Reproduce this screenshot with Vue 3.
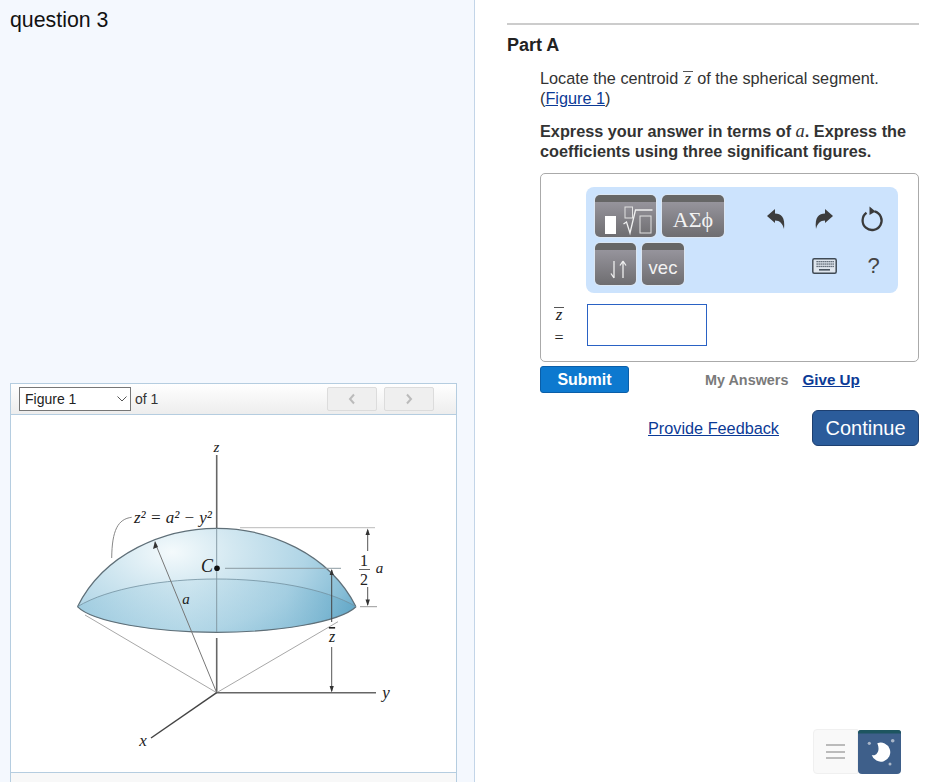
<script setup>
const kbDots = []
for (let r = 0; r < 3; r++) {
  for (let c = 0; c < 9; c++) {
    kbDots.push({ x: 3 + c * 2, y: 3 + r * 2.4 })
  }
}
</script>

<template>
  <div class="page">
    <section class="left">
      <h1 class="title">question 3</h1>
      <div class="panel">
        <div class="panel-head">
          <div class="select">
            <span>Figure 1</span>
            <svg width="10" height="6" viewBox="0 0 10 6"><path d="M0.5 0.5 5 5l4.5-4.5" fill="none" stroke="#555" stroke-width="1" /></svg>
          </div>
          <span class="of">of 1</span>
          <div class="nav">
            <button class="nav-btn" type="button">
              <svg width="8" height="12" viewBox="0 0 8 12"><path d="M6 1.5 2 6l4 4.5" fill="none" stroke="#bbb" stroke-width="2" /></svg>
            </button>
            <button class="nav-btn" type="button">
              <svg width="8" height="12" viewBox="0 0 8 12"><path d="M2 1.5 6 6l-4 4.5" fill="none" stroke="#bbb" stroke-width="2" /></svg>
            </button>
          </div>
        </div>
        <div class="figure">
          <svg class="figure-svg" width="445" height="357" viewBox="11 415 445 357">
            <defs>
              <radialGradient id="domeGrad" gradientUnits="userSpaceOnUse" cx="172" cy="552" r="205" gradientTransform="translate(172 552) scale(1 0.6) translate(-172 -552)">
                <stop offset="0" stop-color="#f4fafc" />
                <stop offset="0.3" stop-color="#d3e8f1" />
                <stop offset="0.65" stop-color="#b0d5e6" />
                <stop offset="0.9" stop-color="#86bdd6" />
                <stop offset="1" stop-color="#6aaccb" />
              </radialGradient>
              <linearGradient id="baseGrad" x1="0" x2="1" y1="0" y2="0">
                <stop offset="0" stop-color="#8fc3da" stop-opacity="0.5" />
                <stop offset="0.4" stop-color="#b9dbe9" stop-opacity="0.35" />
                <stop offset="0.75" stop-color="#94c5db" stop-opacity="0.45" />
                <stop offset="1" stop-color="#62a7c7" stop-opacity="0.75" />
              </linearGradient>
            </defs>
            <line x1="216.7" y1="455" x2="216.7" y2="528" stroke="#666" stroke-width="1.6" />
            <line x1="216.7" y1="638" x2="216.7" y2="693" stroke="#666" stroke-width="1.6" />
            <path d="M85 615 216.7 692.7 338 621.7" fill="none" stroke="#a8a8a8" stroke-width="1" />
            <path d="M77.500 606.700C104 553 165 528.300 216.700 528.300S329 553 356 606.700C340 622 280 632.300 216.700 632.300S92 622 77.500 606.700Z" fill="url(#domeGrad)" />
            <path d="M77.500 606.700C108 588 165 579 216.700 579S325 588 356 606.700C340 622 280 632.300 216.700 632.300S92 622 77.500 606.700Z" fill="url(#baseGrad)" />
            <path d="M77.500 606.700C104 553 165 528.300 216.700 528.300S329 553 356 606.700" fill="none" stroke="#5f6f78" stroke-width="1.2" />
            <path d="M77.500 606.700C92 622 155 632.300 216.700 632.300S340 622 356 606.700" fill="none" stroke="#5f6f78" stroke-width="1.2" />
            <path d="M77.500 606.700C108 588 165 579 216.700 579S325 588 356 606.700" fill="none" stroke="#72909f" stroke-width="0.8" />
            <line x1="216.7" y1="528" x2="216.7" y2="632" stroke="#7d929d" stroke-width="0.9" />
            <line x1="216.7" y1="692.7" x2="155" y2="542.7" stroke="#777" stroke-width="1" />
            <path d="M155 541 153 549 158 547Z" fill="#333" />
            <line x1="240" y1="527.7" x2="375" y2="527.7" stroke="#bbb" stroke-width="1" />
            <line x1="360" y1="606.7" x2="377" y2="606.7" stroke="#999" stroke-width="1" />
            <line x1="225" y1="568.3" x2="341" y2="568.3" stroke="#8b9aa2" stroke-width="1" />
            <line x1="367.7" y1="530" x2="367.7" y2="551" stroke="#555" stroke-width="1" />
            <line x1="367.7" y1="587" x2="367.7" y2="605" stroke="#555" stroke-width="1" />
            <path d="M367.7 528.5 365.5 535h4.4ZM367.7 606 365.5 599.5h4.4Z" fill="#333" />
            <line x1="331.7" y1="570" x2="331.7" y2="622" stroke="#444" stroke-width="1" />
            <line x1="331.7" y1="647" x2="331.7" y2="691" stroke="#555" stroke-width="1" />
            <path d="M331.7 569 329.6 575h4.2ZM331.7 692.5 329.6 686h4.2Z" fill="#333" />
            <line x1="216.7" y1="692.7" x2="376" y2="692.7" stroke="#666" stroke-width="1.6" />
            <line x1="216.7" y1="692.7" x2="151" y2="738" stroke="#444" stroke-width="1.5" />
            <path d="M131.7 517.3C118 519 112 530 111.7 558" fill="none" stroke="#888" stroke-width="1" />
            <circle cx="217" cy="568.3" r="2.8" fill="#111" />
            <g class="fig-text">
              <text x="216.5" y="452" text-anchor="middle" font-size="15">z</text>
              <text x="134" y="523" font-size="17">z² = a² − y²</text>
              <text x="201" y="572" font-size="18">C</text>
              <text x="186" y="604" text-anchor="middle" font-size="15">a</text>
              <text x="379.5" y="573" text-anchor="middle" font-size="15">a</text>
              <text x="386" y="698" text-anchor="middle" font-size="17">y</text>
              <text x="143" y="746" text-anchor="middle" font-size="17">x</text>
              <text x="332" y="642" text-anchor="middle" font-size="16" text-decoration="overline">z</text>
            </g>
            <g class="fig-num">
              <text x="364" y="566" text-anchor="middle" font-size="16">1</text>
              <text x="364" y="585" text-anchor="middle" font-size="16">2</text>
            </g>
            <line x1="359" y1="569.5" x2="370" y2="569.5" stroke="#555" stroke-width="0.9" />
          </svg>
        </div>
        <div class="panel-foot"></div>
      </div>
    </section>

    <section class="right">
      <hr class="rule" />
      <h2 class="part">Part A</h2>
      <div class="content">
        <p class="para">Locate the centroid <span class="zbar">z</span> of the spherical segment.<br />(<a class="link" href="#">Figure 1</a>)</p>
        <p class="para strong">Express your answer in terms of <span class="mathvar">a</span>. Express the coefficients using three significant figures.</p>

        <div class="answer">
          <div class="toolbar">
            <div class="tool-row">
              <div class="tbtn wide1">
                <svg width="61" height="35" viewBox="0 0 61 35">
                  <rect x="10" y="14" width="11" height="18" fill="#fff" />
                  <rect x="30" y="5" width="7.5" height="11" fill="none" stroke="#e2e2e2" stroke-width="1" />
                  <path d="M28.500 22l3-2 3.500 11L40.500 8h17" fill="none" stroke="#f0f0f0" stroke-width="1.300" />
                  <rect x="45" y="14" width="11" height="17" fill="none" stroke="#e2e2e2" stroke-width="1" />
                </svg>
              </div>
              <div class="tbtn wide2"><span class="greek">ΑΣϕ</span></div>
              <div class="tool-icons upper">
                <div class="icell">
                  <svg width="20" height="22" viewBox="0 0 20 22"><path d="M1 8 9 1v4.500c6 0 10.500 3.500 9 15.500-1.500-5.500-4-8.500-9-8.500V15Z" fill="#3d3d3d" /></svg>
                </div>
                <div class="icell">
                  <svg width="20" height="22" viewBox="0 0 20 22"><path d="M19 8 11 1v4.500c-6 0-10.500 3.500-9 15.500 1.500-5.500 4-8.500 9-8.500V15Z" fill="#3d3d3d" /></svg>
                </div>
                <div class="icell">
                  <svg width="26" height="28" viewBox="0 0 26 28">
                    <path d="M15.500 6.300A9.500 9.500 0 1 1 7.500 7.800" fill="none" stroke="#3a3a3a" stroke-width="2.300" />
                    <path d="M10.500 1.500 16.500 6.500 10.500 10Z" fill="#3a3a3a" />
                  </svg>
                </div>
              </div>
            </div>
            <div class="tool-row">
              <div class="tbtn narrow1">
                <svg width="41" height="35" viewBox="0 0 41 35">
                  <path d="M19 11v17M19 28l-3-4.500M28 28V11M28 11l3 4.500M28 11l-3 4.500" fill="none" stroke="#eee" stroke-width="1.300" />
                </svg>
              </div>
              <div class="tbtn narrow2"><span class="vec">vec</span></div>
              <div class="tool-icons lower">
                <div class="icell">
                  <svg width="25" height="16" viewBox="0 0 25 16">
                    <rect x="0.800" y="0.800" width="23.400" height="14.400" rx="1.500" fill="#dfe6ee" stroke="#3f4a55" stroke-width="1.500" />
                    <rect v-for="(d, i) in kbDots" :key="i" :x="d.x + 1.500" :y="d.y" width="1.300" height="1.300" fill="#4a5560" />
                    <rect x="7" y="11" width="11" height="1.600" fill="#4a5560" />
                  </svg>
                </div>
                <div class="icell help">?</div>
              </div>
            </div>
          </div>
          <div class="answer-row">
            <div class="ans-label">
              <span class="zbar">z</span>
              <span class="eq">=</span>
            </div>
            <div class="ans-input"></div>
          </div>
        </div>

        <div class="submit-row">
          <button class="submit" type="button">Submit</button>
          <span class="my">My Answers</span>
          <a class="link giveup" href="#">Give Up</a>
        </div>
        <div class="feedback-row">
          <a class="link" href="#">Provide Feedback</a>
          <button class="continue" type="button">Continue</button>
        </div>
      </div>
    </section>

    <div class="widget">
      <div class="widget-menu">
        <span></span><span></span><span></span>
      </div>
      <div class="widget-moon">
        <svg width="43" height="44" viewBox="0 0 43 44">
          <rect x="0" y="0" width="43" height="3.500" fill="#1d5560" />
          <circle cx="11.300" cy="13.300" r="1.600" fill="#a9b6c8" />
          <circle cx="34.700" cy="10.700" r="1.800" fill="#a9b6c8" />
          <circle cx="32" cy="34" r="1.500" fill="#a9b6c8" />
          <path d="M19.300 13.300A9.500 9.500 0 1 1 13.700 25C19 26.500 22.500 20 19.300 13.300Z" fill="#fff" />
        </svg>
      </div>
    </div>
  </div>
</template>

<style>
html, body { margin: 0; background: #fff; }
</style>

<style scoped>
.page {
  position: relative;
  display: flex;
  width: 929px;
  height: 782px;
  overflow: hidden;
  font-family: "Liberation Sans", Arial, sans-serif;
  color: #333;
  background: #fff;
}
.left {
  box-sizing: border-box;
  width: 475px;
  flex: none;
  padding: 5px 17px 0 10px;
  background: #f4f8fe;
  border-right: 1px solid #c3d5e8;
}
.title {
  margin: 0 0 348px;
  font-size: 21.33px;
  line-height: 30px;
  font-weight: 400;
  color: #111;
}
.panel {
  border: 1px solid #b5cde0;
  background: #fff;
}
.panel-head {
  display: flex;
  align-items: center;
  height: 30px;
  padding-left: 8px;
  padding-right: 22px;
  background: linear-gradient(#fff, #ededed);
  border-bottom: 1px solid #b5cde0;
}
.select {
  box-sizing: border-box;
  display: flex;
  align-items: center;
  justify-content: space-between;
  width: 112px;
  height: 24px;
  padding: 0 3px 0 5px;
  border: 1px solid #767676;
  background: #fff;
  font-size: 14px;
  color: #222;
}
.of {
  margin-left: 4px;
  font-size: 14px;
  color: #333;
}
.nav {
  display: flex;
  gap: 7px;
  margin-left: auto;
}
.nav-btn {
  display: flex;
  align-items: center;
  justify-content: center;
  box-sizing: border-box;
  width: 50px;
  height: 24px;
  padding: 0;
  border: 1px solid #dcdcdc;
  border-radius: 2px;
  background: #efefef;
}
.figure {
  height: 357px;
}
.figure-svg { display: block; }
.fig-text text {
  font-family: "Liberation Serif", serif;
  font-style: italic;
  fill: #222;
}
.fig-num text {
  font-family: "Liberation Serif", serif;
  fill: #222;
}
.panel-foot {
  height: 30px;
  border-top: 1px solid #b5cde0;
  background: #f8f8f8;
}
.right {
  flex: 1;
  min-width: 0;
  padding: 23px 10px 0 32px;
}
.rule {
  margin: 0;
  height: 2px;
  border: 0;
  background: #ccc;
}
.part {
  margin: 10px 0 0;
  font-size: 18px;
  line-height: 20px;
  font-weight: 700;
  color: #222;
}
.content {
  margin-top: 13px;
  padding-left: 33px;
}
.para {
  margin: 0 0 13px;
  font-size: 16.25px;
  line-height: 20px;
  color: #333;
}
.para.strong { font-weight: 700; margin-bottom: 12px; }
.zbar {
  display: inline-block;
  box-sizing: border-box;
  width: 10px;
  height: 13px;
  border-top: 1px solid #555;
  font-family: "Liberation Serif", serif;
  font-style: italic;
  font-weight: 400;
  font-size: 17px;
  line-height: 13px;
  text-align: center;
}
.mathvar {
  font-family: "Liberation Serif", serif;
  font-style: italic;
  font-weight: 400;
  font-size: 18.5px;
  line-height: 1;
}
.link {
  color: #0b3a96;
  text-decoration: underline;
}
.answer {
  box-sizing: border-box;
  height: 189px;
  padding: 13px 20px 0 45px;
  border: 1px solid #aaa;
  border-radius: 5px;
  background: #fff;
}
.toolbar {
  box-sizing: border-box;
  width: 312px;
  height: 106px;
  padding: 8px 2px 0 9px;
  background: #cce3fd;
  border-radius: 8px;
}
.tool-row {
  display: flex;
  gap: 6px;
  height: 42px;
  margin-bottom: 6px;
}
.tbtn {
  box-sizing: border-box;
  height: 42px;
  padding-top: 7px;
  border-radius: 5px;
  background: linear-gradient(#666 7px, #96949c 7px, #6e6d70);
  box-shadow: 0 0 0 1px #dbe6f2;
  display: flex;
  align-items: center;
  justify-content: center;
  color: #f2f2f2;
}
.wide1 { width: 61px; }
.wide2 { width: 62px; }
.narrow1 { width: 41px; }
.narrow2 { width: 42px; }
.greek {
  font-family: "Liberation Serif", serif;
  font-size: 22px;
  line-height: 1;
}
.vec {
  font-size: 18.5px;
  line-height: 1;
  margin-top: 1px;
}
.tool-icons {
  display: flex;
  margin-left: auto;
}
.upper { padding-top: 3px; }
.lower { padding-top: 2px; }
.icell {
  display: flex;
  align-items: center;
  justify-content: center;
  width: 48px;
  height: 42px;
}
.help {
  padding-left: 3px;
  box-sizing: border-box;
  font-size: 22px;
  color: #444;
}
.answer-row {
  display: flex;
  margin-top: 11px;
}
.ans-label {
  display: flex;
  flex-direction: column;
  align-items: center;
  width: 36px;
  margin-left: -45px;
  margin-right: 10px;
  padding-top: 3px;
  font-size: 16px;
  line-height: 20px;
  color: #222;
}
.eq {
  font-family: "Liberation Serif", serif;
  margin-top: 8px;
}
.ans-input {
  box-sizing: border-box;
  width: 120px;
  height: 42px;
  border: 1px solid #2a62c4;
  background: #fff;
}
.submit-row {
  display: flex;
  align-items: center;
  margin-top: 4px;
  height: 27px;
  font-weight: 700;
}
.submit {
  box-sizing: border-box;
  width: 89px;
  height: 27px;
  padding: 0;
  border: 1px solid #0a5ea8;
  border-radius: 3px;
  background: #0d79cf;
  color: #fff;
  font: 700 16px "Liberation Sans", Arial, sans-serif;
}
.my {
  margin-left: 76px;
  font-size: 14.4px;
  color: #7a7a7a;
}
.giveup {
  margin-left: 14px;
  font-size: 15.2px;
}
.feedback-row {
  display: flex;
  align-items: center;
  justify-content: flex-end;
  gap: 33px;
  margin-top: 17px;
  font-size: 16.25px;
}
.continue {
  box-sizing: border-box;
  width: 107px;
  height: 36px;
  padding: 0;
  border: 1px solid #1d3f70;
  border-radius: 6px;
  background: #2b5c9b;
  color: #fff;
  font: 400 20px "Liberation Sans", Arial, sans-serif;
}
.widget {
  position: absolute;
  left: 813px;
  top: 730px;
  display: flex;
  height: 44px;
}
.widget-menu {
  box-sizing: border-box;
  display: flex;
  flex-direction: column;
  align-items: center;
  justify-content: center;
  gap: 4.500px;
  width: 45px;
  height: 45px;
  margin-top: -1px;
  background: #f9f9f9;
  border: 1px solid #f0f0f0;
  border-radius: 4px 0 0 4px;
}
.widget-menu span {
  display: block;
  width: 19px;
  height: 2px;
  background: #bbb;
}
.widget-moon {
  width: 43px;
  height: 44px;
  background: #3e5f8a;
  border-radius: 3px 3px 4px 4px;
  overflow: hidden;
}
.widget-moon svg { display: block; }
</style>
